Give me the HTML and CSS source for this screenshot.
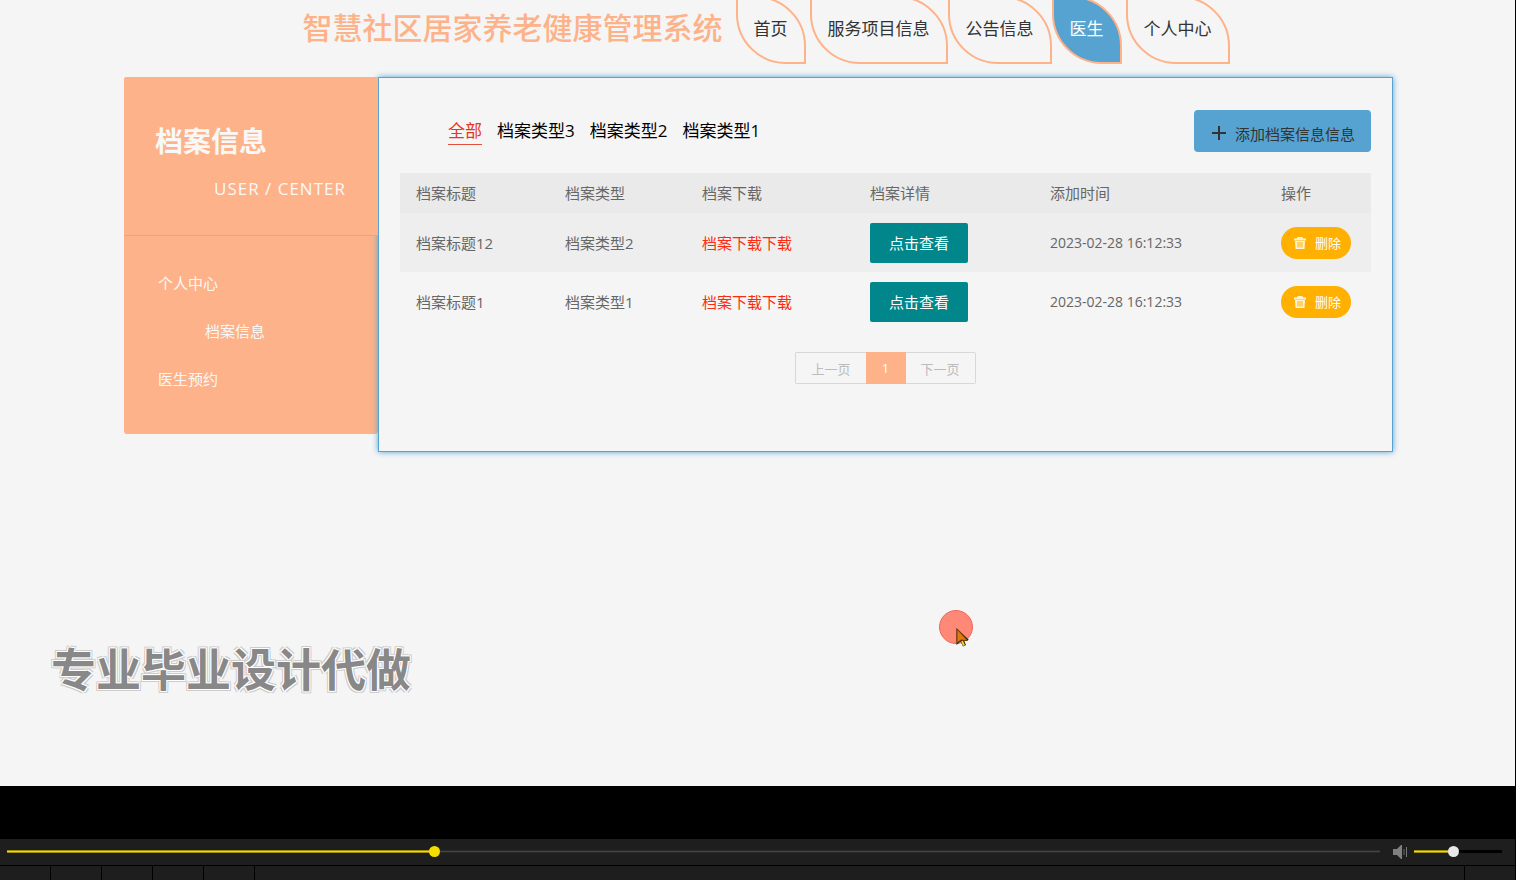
FILE: index.html
```html
<!DOCTYPE html>
<html lang="zh-CN">
<head>
    <meta charset="UTF-8">
    <meta name="viewport" content="width=device-width, initial-scale=1.0">
    <title>智慧社区居家养老健康管理系统</title>
    <link rel="stylesheet" href="styles.css">
</head>
<body>
    <div class="screen">
        <header class="header">
            <h1>智慧社区居家养老健康管理系统</h1>
            <nav class="nav">
                <a href="#">首页</a>
                <a href="#" class="space">服务项目信息</a>
                <a href="#">公告信息</a>
                <a href="#" class="active">医生</a>
                <a href="#" class="space">个人中心</a>
            </nav>
        </header>
        <div class="container">
            <aside class="side">
                <div class="side-head">
                    <h2>档案信息</h2>
                    <p>USER / CENTER</p>
                </div>
                <ul class="side-menu">
                    <li><a href="#">个人中心</a></li>
                    <li class="sub"><a href="#">档案信息</a></li>
                    <li><a href="#">医生预约</a></li>
                </ul>
            </aside>
            <main class="main">
                <div class="toolbar">
                    <div class="tabs">
                        <a href="#" class="active">全部</a>
                        <a href="#">档案类型3</a>
                        <a href="#">档案类型2</a>
                        <a href="#">档案类型1</a>
                    </div>
                    <button type="button" class="btn-add">
                        <svg width="14" height="14" viewBox="0 0 14 14"><path d="M7 0v14M0 7h14" stroke="#333" stroke-width="2"/></svg>
                        添加档案信息信息
                    </button>
                </div>
                <table class="table">
                    <colgroup>
                        <col class="c1"><col class="c2"><col class="c3"><col class="c4"><col class="c5"><col class="c6">
                    </colgroup>
                    <thead>
                        <tr>
                            <th>档案标题</th>
                            <th>档案类型</th>
                            <th>档案下载</th>
                            <th>档案详情</th>
                            <th>添加时间</th>
                            <th>操作</th>
                        </tr>
                    </thead>
                    <tbody>
                        <tr class="hover">
                            <td>档案标题12</td>
                            <td>档案类型2</td>
                            <td><a href="#" class="down">档案下载下载</a></td>
                            <td><button type="button" class="btn-view">点击查看</button></td>
                            <td class="time">2023-02-28 16:12:33</td>
                            <td>
                                <button type="button" class="btn-del">
                                    <svg width="14" height="14" viewBox="0 0 14 14"><path d="M4.500 1h5l.5 1.500h3v2H1v-2h3z" fill="#fff3d0"/><path d="M2 5h10l-.5 8h-9z" fill="#fff3d0"/><path d="M5 6v5.500M7 6v5.500M9 6v5.500" stroke="#ffb000"/></svg>
                                    删除
                                </button>
                            </td>
                        </tr>
                        <tr>
                            <td>档案标题1</td>
                            <td>档案类型1</td>
                            <td><a href="#" class="down">档案下载下载</a></td>
                            <td><button type="button" class="btn-view">点击查看</button></td>
                            <td class="time">2023-02-28 16:12:33</td>
                            <td>
                                <button type="button" class="btn-del">
                                    <svg width="14" height="14" viewBox="0 0 14 14"><path d="M4.500 1h5l.5 1.500h3v2H1v-2h3z" fill="#fff3d0"/><path d="M2 5h10l-.5 8h-9z" fill="#fff3d0"/><path d="M5 6v5.500M7 6v5.500M9 6v5.500" stroke="#ffb000"/></svg>
                                    删除
                                </button>
                            </td>
                        </tr>
                    </tbody>
                </table>
                <div class="pager">
                    <button type="button">上一页</button>
                    <button type="button" class="active">1</button>
                    <button type="button">下一页</button>
                </div>
            </main>
        </div>
        <div class="watermark">专业毕业设计代做</div>
        <svg class="cursor" width="36" height="40" viewBox="0 0 36 40">
            <circle cx="18" cy="18" r="16.500" fill="#ff8876" stroke="#f0685c"/>
            <path d="M18.500 19v17l4-3.500 2.500 5 3-1.500-2-4.500 5-.500z" fill="#222"/>
            <path d="M24 32l2 4.500" stroke="#d8e020" stroke-width="2"/>
            <path d="M19 20v14l4-3 6.500.5z" fill="#e07a10" stroke="#7a3a08"/>
        </svg>
    </div>

    <!-- 播放器 -->
    <div class="player">
        <div class="controls">
            <input type="range" class="seek" min="0" max="1000" value="310" aria-label="播放进度">
            <svg class="horn" width="15" height="14" viewBox="0 0 15 14">
                <path d="M0 4h4l4-4h1v14H8l-4-4H0z" fill="#808080"/>
                <path d="M11 4v6" stroke="#666"/>
                <path d="M13.500 2v10" stroke="#777"/>
            </svg>
            <input type="range" class="volume" min="0" max="1000" value="440" aria-label="音量">
        </div>
        <div class="cells">
            <span></span><span></span><span></span><span></span><span></span>
            <span class="last"></span>
        </div>
    </div>
</body>
</html>
```
FILE: styles.css
```css
* { margin: 0; padding: 0; box-sizing: border-box;}
body{min-height: 100vh; display: flex; flex-direction: column; background: #f5f5f5; border-right: 1px solid #000; font-family: "Open Sans", "Noto Sans CJK SC", sans-serif; font-size: 15px; color: #666; overflow-x: hidden;}
a{color: inherit; text-decoration: none;}
ul{list-style: none;}
button{font-family: inherit; border: none; cursor: pointer;}
svg{display: block; flex: none;}

.screen{flex: 1; position: relative; overflow: hidden;}

/* 头部 */
.header{height: 77px; display: flex; justify-content: center; padding-left: 17px; gap: 13px;}
.header h1{font-size: 30px; font-weight: 500; line-height: 56px; color: #fdb289; white-space: nowrap;}
.nav{display: flex; margin-top: -4px; white-space: nowrap;}
.nav a{height: 68px; line-height: 62px; padding: 0 16px; border: 2px solid #fdb289; border-radius: 0 50px 0 50px; font-size: 17px; color: #333;}
.nav a.space{margin-left: 4px;}
.nav a.active{background: #56a3d2; color: #fff;}

.container{display: flex; align-items: flex-start; margin: 0 122px 0 124px;}

/* 左侧菜单 */
.side{flex: none; width: 254px; background: #fdb289; border-radius: 3px; color: #f8f8f8;}
.side-head{height: 159px; padding: 44px 0 0 31px; background: #fdb289; border-bottom: 1px solid #eba37c; border-radius: 3px 0 0 0; position: relative; z-index: 1;}
.side-head h2{font-size: 28px; line-height: 40px;}
.side-head p{margin-top: 16px; padding-left: 59px; font-size: 17px; line-height: 24px; letter-spacing: 1px;}
.side-menu{padding: 23px 0 31px 34px;}
.side-menu li{line-height: 48px;}
.side-menu .sub{padding-left: 47px;}

/* 右侧内容 */
.main{flex: 1; min-width: 0; padding: 32px 21px 67px; border: 1px solid #56a3d2; box-shadow: 0 0 6px #56a3d2; background: #f5f5f5;}
.toolbar{display: flex; justify-content: space-between; align-items: center; padding-left: 48px;}
.tabs{display: flex; gap: 15px; font-size: 17px; line-height: 26px; color: #000;}
.tabs a{border-bottom: 1px solid transparent;}
.tabs a.active{color: #e8351c; border-color: #e0503c;}
.btn-add{display: flex; align-items: center; gap: 9px; height: 42px; padding: 4px 16px 0 18px; background: #56a3d2; border-radius: 4px; font-size: 15px; color: #333;}

.table{width: 100%; margin-top: 21px; border-collapse: collapse; table-layout: fixed; line-height: 24px;}
.table th{height: 40px; padding-left: 16px; background: #eaeaea; font-weight: 400; text-align: left;}
.table td{height: 59px; padding-left: 16px;}
.table .hover{background: #eee;}
.table .time{font-size: 14px;}
.c1{width: 149px;}
.c2{width: 137px;}
.c3{width: 168px;}
.c4{width: 180px;}
.c5{width: 231px;}
.c6{width: 106px;}
.down{color: #fb2b11;}
.btn-view{display: block; height: 40px; padding: 0 19px; background: #00868b; border-radius: 2px; font-size: 15px; color: #fff;}
.btn-del{display: flex; align-items: center; gap: 8px; width: 70px; height: 32px; padding-left: 12px; background: #ffb000; border-radius: 16px; font-size: 13px; color: #fff; white-space: nowrap;}

.pager{display: flex; justify-content: center; margin-top: 21px;}
.pager button{height: 32px; padding: 0 15px; background: none; border: 1px solid #d8d8d8; font-size: 13px; color: #bbb;}
.pager button:first-child{border-right: none; border-radius: 2px 0 0 2px;}
.pager button:last-child{border-left: none; border-radius: 0 2px 2px 0;}
.pager .active{width: 40px; background: #fdb289; border-color: #fdb289; color: #fff;}

/* 浮层 */
.watermark{position: absolute; left: 51px; bottom: 86px; font-size: 45px; line-height: 60px; font-weight: 700; color: #888; text-shadow: 1px 1px 0 #fff, -1px -1px 0 #fff, 1px -1px 0 #fff, -1px 1px 0 #fff, 2px 2px 0 #ccc, -2px -2px 0 #ccc, 2px -2px 0 #ccc, -2px 2px 0 #ccc;}
.cursor{position: absolute; left: 938px; top: 609px;}

/* 播放器 */
.player{border-top: 53px solid #000; background: #1e1e1e;}
.controls{display: flex; align-items: center; height: 27px; padding: 0 13px 1px 7px; border-bottom: 1px solid #000;}
.controls input{appearance: none; -webkit-appearance: none; height: 11px; min-width: 0; background: none;}
.seek{flex: 1;}
.volume{width: 88px;}
.horn{margin: 0 6px 0 13px;}
.seek::-webkit-slider-runnable-track{height: 3px; background: linear-gradient(90deg, #f5dd00 31%, #444 31%) 0 1px / 100% 1px no-repeat, linear-gradient(90deg, #a08f08 31%, #2a2a2a 31%);}
.volume::-webkit-slider-runnable-track{height: 3px; background: linear-gradient(90deg, #f5dd00 44%, #000 44%) 0 1px / 100% 1px no-repeat, linear-gradient(90deg, #a08f08 44%, #000 44%);}
.controls input::-webkit-slider-thumb{-webkit-appearance: none; width: 11px; height: 11px; margin-top: -4px; border-radius: 50%; background: #f5dd00;}
.controls .volume::-webkit-slider-thumb{background: #e8e8e8;}
.cells{display: flex; height: 14px;}
.cells span{width: 51px; border-right: 1px solid #000;}
.cells .last{margin-left: auto; border-right: none; border-left: 1px solid #000;}
```
